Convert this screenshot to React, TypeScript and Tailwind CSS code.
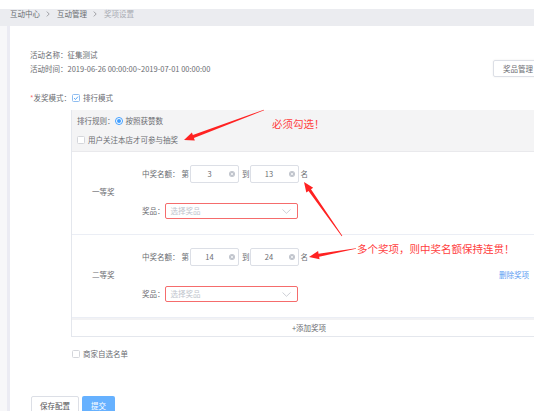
import React from "react";

const font = "font-['Noto_Sans_CJK_SC','Noto_Sans',sans-serif]";

// tapered red arrow, tail -> tip
function arrowPoints(x1: number, y1: number, x2: number, y2: number) {
  const dx = x2 - x1;
  const dy = y2 - y1;
  const len = Math.hypot(dx, dy);
  const ux = dx / len;
  const uy = dy / len;
  const nx = -uy;
  const ny = ux;
  const head = 10;
  const hw = 4.2;
  const sw = 1.5;
  const tw = 0.35;
  const bx = x2 - ux * head;
  const by = y2 - uy * head;
  const pts = [
    [x1 + nx * tw, y1 + ny * tw],
    [bx + nx * sw, by + ny * sw],
    [bx + nx * hw, by + ny * hw],
    [x2, y2],
    [bx - nx * hw, by - ny * hw],
    [bx - nx * sw, by - ny * sw],
    [x1 - nx * tw, y1 - ny * tw],
  ];
  return pts.map((p) => p.map((v) => v.toFixed(2)).join(",")).join(" ");
}

function Sep() {
  return (
    <svg width="4" height="6" viewBox="0 0 4 6" className="mx-[6px]">
      <path d="M0.8 0.6 L3.2 3 L0.8 5.4" fill="none" stroke="#8a8c91" strokeWidth="0.8" />
    </svg>
  );
}

function Check({ checked }: { checked?: boolean }) {
  return (
    <svg width="8" height="8" viewBox="0 0 8 8" className="shrink-0">
      <rect x="0.5" y="0.5" width="7" height="7" rx="1" fill="white" stroke={checked ? "#8fbdf0" : "#d4d6db"} />
      {checked && <path d="M2 4.1 L3.5 5.5 L6 2.6" fill="none" stroke="#4a9df5" strokeWidth="0.9" />}
    </svg>
  );
}

function Radio() {
  return (
    <svg width="8" height="8" viewBox="0 0 8 8" className="shrink-0">
      <circle cx="4" cy="4" r="3.5" fill="white" stroke="#409eff" />
      <circle cx="4" cy="4" r="2" fill="#409eff" />
    </svg>
  );
}

function NumInput({ value }: { value: string }) {
  return (
    <div className="relative w-[49px] h-[18px] border border-[#dcdfe6] rounded-[2px] bg-white flex items-center">
      <span className="flex-1 text-center pr-[10px]">{value}</span>
      <svg width="6" height="6" viewBox="0 0 6 6" className="absolute right-[3px]">
        <circle cx="3" cy="3" r="3" fill="#c0c4cc" />
        <path d="M1.8 1.8 L4.2 4.2 M4.2 1.8 L1.8 4.2" stroke="white" strokeWidth="0.7" />
      </svg>
    </div>
  );
}

function PrizeSelect() {
  return (
    <div className="w-[133px] h-[16px] border border-[#f56c6c] rounded-[2px] bg-white flex items-center justify-between pl-[5px] pr-[6px] text-[#c0c4cc]">
      <span>选择奖品</span>
      <svg width="9" height="5" viewBox="0 0 9 5">
        <path d="M0.5 0.5 L4.5 4.3 L8.5 0.5" fill="none" stroke="#c0c4cc" strokeWidth="0.8" />
      </svg>
    </div>
  );
}

function PrizeRow({ label, from, to, removable }: { label: string; from: string; to: string; removable?: boolean }) {
  return (
    <div className="flex items-center border-b border-[#ebeef5] pt-[13px] pb-[15px]">
      <div className="w-[70px] pl-[20px]">{label}</div>
      <div className="flex flex-col">
        <div className="flex items-center h-[18px]">
          <span>中奖名额：</span>
          <span className="ml-[2px] mr-[1px]">第</span>
          <NumInput value={from} />
          <span className="ml-[3px]">到</span>
          <NumInput value={to} />
          <span className="ml-[2px]">名</span>
        </div>
        <div className="flex items-center mt-[20px] h-[16px]">
          <span>奖品：</span>
          <PrizeSelect />
        </div>
      </div>
      {removable && <span className="ml-auto mr-[17px] text-[#5b9cf2]">删除奖项</span>}
    </div>
  );
}

export default function App() {
  return (
    <div className={`relative w-[534px] h-[411px] overflow-hidden bg-white text-[7.5px] leading-[14px] text-[#6a6c71] ${font}`}>
      <div className="h-[9px]" />
      {/* breadcrumb */}
      <div className="h-[17px] bg-[#ebecf0] pl-[10px] flex items-start leading-[9px]">
        <div className="flex items-center h-[9px]">
          <span>互动中心</span>
          <Sep />
          <span className="ml-[1px]">互动管理</span>
          <Sep />
          <span className="text-[#a8abb2] ml-[1px]">奖项设置</span>
        </div>
      </div>

      <div className="flex h-[385px]">
        <div className="w-[7px] bg-[#f7f7f9]" />
        <div className="w-[3px] bg-[#ebebf3]" />
        <div className="flex-1 min-w-0 pl-[20px] pt-[22px]">
          {/* activity info */}
          <div className="flex justify-between items-end">
            <div className="flex flex-col">
              <span>活动名称：征集测试</span>
              <span>活动时间：2019-06-26 00:00:00~2019-07-01 00:00:00</span>
            </div>
            <div className="w-[49px] h-[17px] mr-[-8px] mb-[-1px] border border-[#dcdfe6] rounded-[2px] flex items-center pl-[9px] shadow-[0_0_2px_rgba(0,0,0,0.08)]">
              奖品管理
            </div>
          </div>

          {/* award mode */}
          <div className="flex items-center h-[14px] mt-[15px]">
            <div className="w-[42px]">
              <span className="text-[#f56c6c]">*</span>发奖模式：
            </div>
            <Check checked />
            <span className="ml-[3px]">排行模式</span>
          </div>

          {/* rank panel */}
          <div className="mt-[5px] ml-[41px] mr-[-12px] border-l border-b border-[#e4e7ed]">
            <div className="h-[42px] bg-[#f4f4f5] pl-[5px] pt-[4px] flex flex-col gap-[5px] border-b border-[#e9e9ec]">
              <div className="flex items-center h-[14px]">
                <span>排行规则：</span>
                <Radio />
                <span className="ml-[3px]">按照获赞数</span>
              </div>
              <div className="flex items-center h-[14px]">
                <Check />
                <span className="ml-[3px]">用户关注本店才可参与抽奖</span>
              </div>
            </div>
            <PrizeRow label="一等奖" from="3" to="13" />
            <PrizeRow label="二等奖" from="14" to="24" removable />
            <div className="h-[2px] bg-[#f2f2f4]" />
            <div className="h-[16px] flex items-center justify-center leading-[16px]">+添加奖项</div>
          </div>

          {/* merchant list */}
          <div className="flex items-center h-[14px] mt-[10px] ml-[42px]">
            <Check />
            <span className="ml-[3px]">商家自选名单</span>
          </div>

          {/* actions */}
          <div className="flex gap-[3px] mt-[35px] ml-[1px]">
            <div className="w-[48px] h-[20px] border border-[#dcdfe6] rounded-[2px] flex items-center justify-center text-[#555]">
              保存配置
            </div>
            <div className="w-[33px] h-[20px] rounded-[2px] bg-[#66b1ff] flex items-center justify-center text-white">
              提交
            </div>
          </div>
        </div>
      </div>

      {/* annotations */}
      <span className="absolute left-[272px] top-[117px] text-[10.5px] leading-[14px] text-[#ff4040] whitespace-nowrap">
        必须勾选！
      </span>
      <span className="absolute left-[357px] top-[242px] text-[10.5px] leading-[14px] text-[#ff4040] whitespace-nowrap">
        多个奖项，则中奖名额保持连贯！
      </span>
      <svg className="absolute inset-0 pointer-events-none" width="534" height="411" viewBox="0 0 534 411">
        <polygon points={arrowPoints(264, 110, 184, 140)} fill="#f22" />
        <polygon points={arrowPoints(356, 248.5, 309, 257)} fill="#f22" />
        <polygon points={arrowPoints(342, 236, 304, 182)} fill="#f22" />
      </svg>
    </div>
  );
}
